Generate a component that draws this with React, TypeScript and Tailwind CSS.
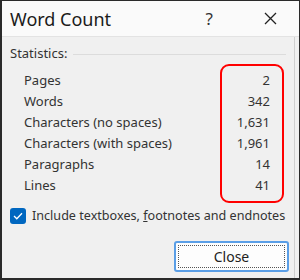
import React from 'react';

const stats = [
  { label: 'Pages', value: '2' },
  { label: 'Words', value: '342' },
  { label: 'Characters (no spaces)', value: '1,631' },
  { label: 'Characters (with spaces)', value: '1,961' },
  { label: 'Paragraphs', value: '14' },
  { label: 'Lines', value: '41' },
];

export default function App() {
  return (
    <div
      className="w-[300px] h-[280px] border-l-2 border-t border-b-2 border-r border-[#2a2a2a] bg-[#f0f0f0] flex flex-col overflow-hidden"
      style={{ fontFamily: '"Noto Sans", "Open Sans", sans-serif' }}
    >
      {/* title bar */}
      <div className="h-[36px] shrink-0 bg-[#fafafa] border-b border-[#e3e3e3] flex items-center pl-[8px] pr-[16px] text-[#1b1b1b]">
        <span className="text-[18px] leading-none">Word Count</span>
        <span className="ml-auto text-[17px] leading-none text-[#333] mr-[51px]">?</span>
        <svg width="13" height="13" viewBox="0 0 13 13" className="mr-[6px]">
          <path d="M1 1L12 12M12 1L1 12" stroke="#222" strokeWidth="1.3" />
        </svg>
      </div>

      <div className="flex-1 border-r border-[#cfcfcf] mr-[4px] pl-[8px] pr-[8px]">
        <div className="flex items-center mt-[8px] h-[18px]">
          <span className="text-[13px] text-[#333]">Statistics:</span>
          <div className="flex-1 ml-[6px] border-t border-[#dcdcdc]" />
        </div>

        <div className="relative mt-[7px] pl-[14px] pr-[16px]">
          {stats.map((s) => (
            <div key={s.label} className="flex items-center h-[21px] text-[13px] text-[#333]">
              <span>{s.label}</span>
              <span className="ml-auto">{s.value}</span>
            </div>
          ))}
          <div className="absolute left-[210px] top-[-6px] w-[64px] h-[139px] border-2 border-[#ff0000] rounded-[9px]" />
        </div>

        <div className="flex items-center mt-[11px] gap-[6px]">
          <div className="w-[16px] h-[16px] shrink-0 rounded-[3px] bg-[#0067c0] flex items-center justify-center">
            <svg width="10" height="8" viewBox="0 0 10 8">
              <path d="M1 4L3.8 6.8L9 1.2" stroke="white" strokeWidth="1.3" fill="none" />
            </svg>
          </div>
          <span className="text-[12.6px] text-[#333] whitespace-nowrap">
            Include textboxes, <span className="underline">f</span>ootnotes and endnotes
          </span>
        </div>

        <div className="flex justify-end mt-[15px] -mr-[3px]">
          <button className="w-[115px] h-[31px] border-2 border-[#5a9ee6] rounded-[3px] bg-[#fdfdfd] p-[2px]">
            <div className="w-full h-full border border-dotted border-[#555] flex items-center justify-center text-[14px] text-[#222]">
              Close
            </div>
          </button>
        </div>
      </div>
    </div>
  );
}
